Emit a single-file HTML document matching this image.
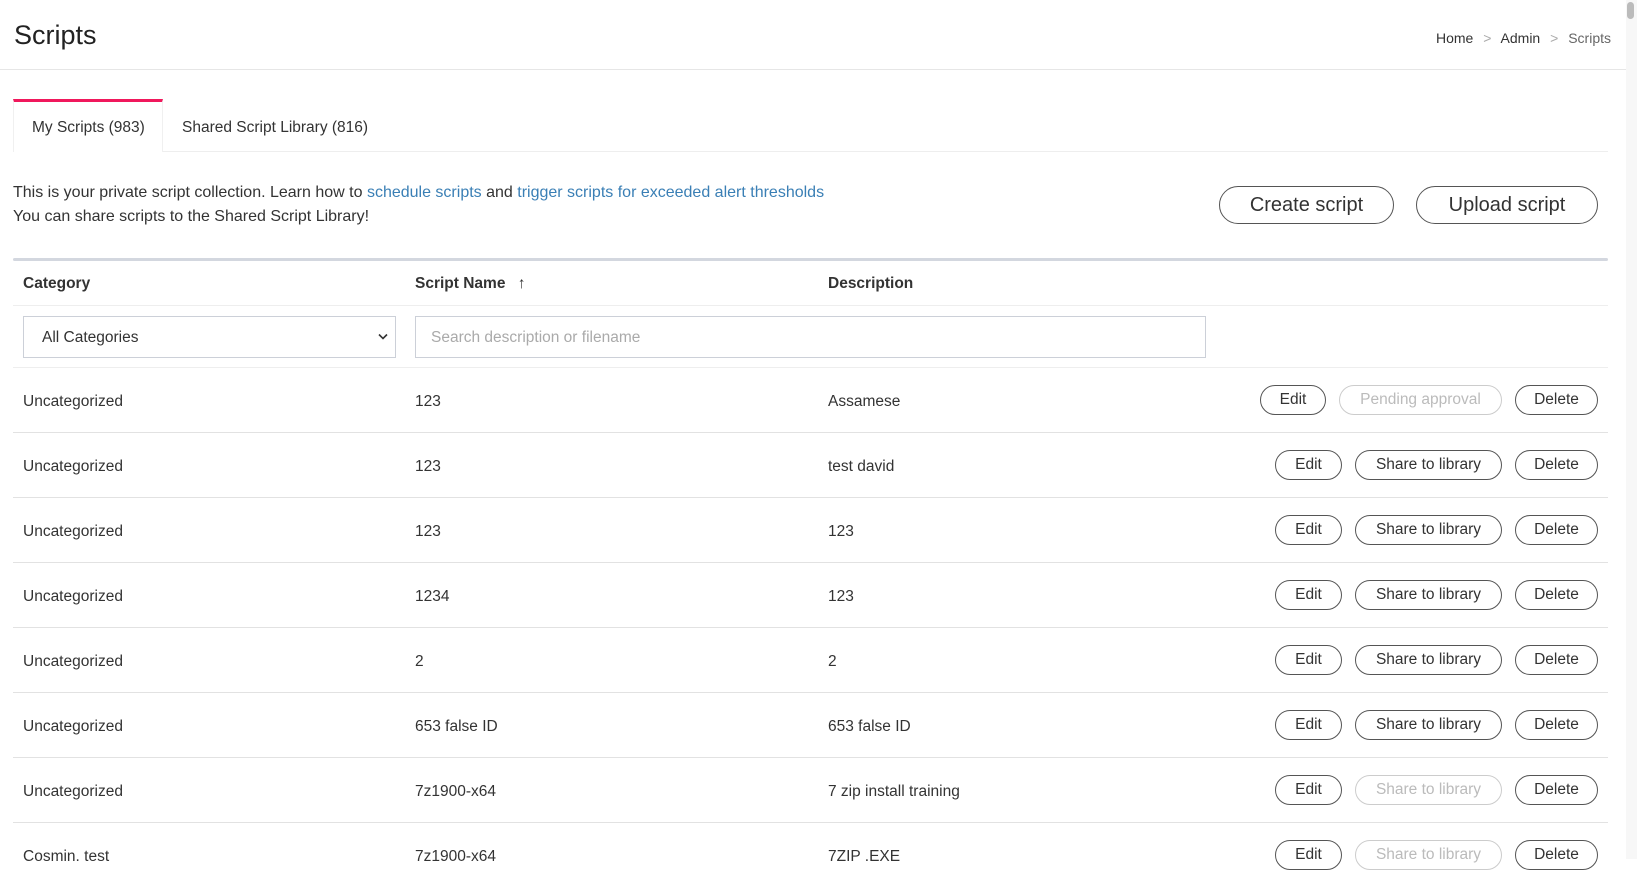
<!DOCTYPE html>
<html><head><meta charset="utf-8"><style>
*{box-sizing:border-box;margin:0;padding:0}
body{width:1637px;height:859px;overflow:hidden;background:#fff;font-family:"Liberation Sans",sans-serif;color:#333;font-size:15.5px;position:relative}
.a{position:absolute;white-space:nowrap}
.btn{position:absolute;border:1px solid #555;border-radius:16px;height:30px;line-height:28px;text-align:center;font-size:15.5px;color:#333;background:#fff}
.dis{border-color:#ccc;color:#bbb}
.line{position:absolute;left:13px;width:1595px;height:1px;background:#e2e2e2}
a{color:#3a7fb5;text-decoration:none}
</style></head><body>
<div class="a" style="left:14px;top:20px;font-size:27px;color:#222">Scripts</div>
<div class="a" style="left:1436px;top:30px;font-size:14px;color:#333">Home <span style="color:#aaa;margin:0 6px">&gt;</span> Admin <span style="color:#aaa;margin:0 6px">&gt;</span> <span style="color:#666">Scripts</span></div>
<div class="a" style="left:0;top:69px;width:1626px;height:1px;background:#e6e6e6"></div>
<div class="a" style="left:1626px;top:0;width:11px;height:859px;background:#f7f7f7"></div>
<div class="a" style="left:1627px;top:2px;width:7px;height:17px;background:#bbb;border-radius:4px"></div>

<div class="a" style="left:13px;top:99px;width:150px;height:53px;border-top:3px solid #f0185c;background:#fff;border-left:1px solid #f0f0f0;border-right:1px solid #f0f0f0"></div>
<div class="a" style="left:163px;top:151px;width:1445px;height:1px;background:#eee"></div>
<div class="a" style="left:32px;top:119px;font-size:15.5px">My Scripts (983)</div>
<div class="a" style="left:182px;top:119px;font-size:15.5px">Shared Script Library (816)</div>

<div class="a" style="left:13px;top:184px;font-size:16px">This is your private script collection. Learn how to <a>schedule scripts</a> and <a>trigger scripts for exceeded alert thresholds</a></div>
<div class="a" style="left:13px;top:208px;font-size:16px">You can share scripts to the Shared Script Library!</div>
<div class="btn" style="left:1219px;top:186px;width:175px;height:38px;line-height:36px;border-radius:19px;font-size:20px">Create script</div>
<div class="btn" style="left:1416px;top:186px;width:182px;height:38px;line-height:36px;border-radius:19px;font-size:20px">Upload script</div>

<div class="a" style="left:13px;top:258px;width:1595px;height:3px;background:#d3d7df;border-radius:2px"></div>
<div class="a" style="left:23px;top:275px;font-weight:bold;font-size:15.5px">Category</div>
<div class="a" style="left:415px;top:275px;font-weight:bold;font-size:15.5px">Script Name <span style="margin-left:8px;font-weight:normal">&#8593;</span></div>
<div class="a" style="left:828px;top:275px;font-weight:bold;font-size:15.5px">Description</div>
<div class="line" style="top:305px;background:#eee"></div>
<div class="a" style="left:23px;top:316px;width:373px;height:42px;border:1px solid #ccd0d8"></div>
<div class="a" style="left:42px;top:329px">All Categories</div>
<svg class="a" style="left:378px;top:333px" width="10" height="8"><path d="M1 1.5L5 5.5L9 1.5" fill="none" stroke="#333" stroke-width="1.6"/></svg>
<div class="a" style="left:415px;top:316px;width:791px;height:42px;border:1px solid #ccd0d8"></div>
<div class="a" style="left:431px;top:329px;color:#aaa">Search description or filename</div>
<div class="line" style="top:367px;background:#eee"></div>

<div class="a" style="left:23px;top:393px">Uncategorized</div><div class="a" style="left:415px;top:393px">123</div><div class="a" style="left:828px;top:393px">Assamese</div>
<div class="btn" style="left:1260px;top:385px;width:66px">Edit</div><div class="btn dis" style="left:1339px;top:385px;width:163px">Pending approval</div><div class="btn" style="left:1515px;top:385px;width:83px">Delete</div>
<div class="line" style="top:432px"></div>

<div class="a" style="left:23px;top:458px">Uncategorized</div><div class="a" style="left:415px;top:458px">123</div><div class="a" style="left:828px;top:458px">test david</div>
<div class="btn" style="left:1275px;top:450px;width:67px">Edit</div><div class="btn" style="left:1355px;top:450px;width:147px">Share to library</div><div class="btn" style="left:1515px;top:450px;width:83px">Delete</div>
<div class="line" style="top:497px"></div>

<div class="a" style="left:23px;top:523px">Uncategorized</div><div class="a" style="left:415px;top:523px">123</div><div class="a" style="left:828px;top:523px">123</div>
<div class="btn" style="left:1275px;top:515px;width:67px">Edit</div><div class="btn" style="left:1355px;top:515px;width:147px">Share to library</div><div class="btn" style="left:1515px;top:515px;width:83px">Delete</div>
<div class="line" style="top:562px"></div>

<div class="a" style="left:23px;top:588px">Uncategorized</div><div class="a" style="left:415px;top:588px">1234</div><div class="a" style="left:828px;top:588px">123</div>
<div class="btn" style="left:1275px;top:580px;width:67px">Edit</div><div class="btn" style="left:1355px;top:580px;width:147px">Share to library</div><div class="btn" style="left:1515px;top:580px;width:83px">Delete</div>
<div class="line" style="top:627px"></div>

<div class="a" style="left:23px;top:653px">Uncategorized</div><div class="a" style="left:415px;top:653px">2</div><div class="a" style="left:828px;top:653px">2</div>
<div class="btn" style="left:1275px;top:645px;width:67px">Edit</div><div class="btn" style="left:1355px;top:645px;width:147px">Share to library</div><div class="btn" style="left:1515px;top:645px;width:83px">Delete</div>
<div class="line" style="top:692px"></div>

<div class="a" style="left:23px;top:718px">Uncategorized</div><div class="a" style="left:415px;top:718px">653 false ID</div><div class="a" style="left:828px;top:718px">653 false ID</div>
<div class="btn" style="left:1275px;top:710px;width:67px">Edit</div><div class="btn" style="left:1355px;top:710px;width:147px">Share to library</div><div class="btn" style="left:1515px;top:710px;width:83px">Delete</div>
<div class="line" style="top:757px"></div>

<div class="a" style="left:23px;top:783px">Uncategorized</div><div class="a" style="left:415px;top:783px">7z1900-x64</div><div class="a" style="left:828px;top:783px">7 zip install training</div>
<div class="btn" style="left:1275px;top:775px;width:67px">Edit</div><div class="btn dis" style="left:1355px;top:775px;width:147px">Share to library</div><div class="btn" style="left:1515px;top:775px;width:83px">Delete</div>
<div class="line" style="top:822px"></div>

<div class="a" style="left:23px;top:848px">Cosmin. test</div><div class="a" style="left:415px;top:848px">7z1900-x64</div><div class="a" style="left:828px;top:848px">7ZIP .EXE</div>
<div class="btn" style="left:1275px;top:840px;width:67px">Edit</div><div class="btn dis" style="left:1355px;top:840px;width:147px">Share to library</div><div class="btn" style="left:1515px;top:840px;width:83px">Delete</div>
</body></html>
